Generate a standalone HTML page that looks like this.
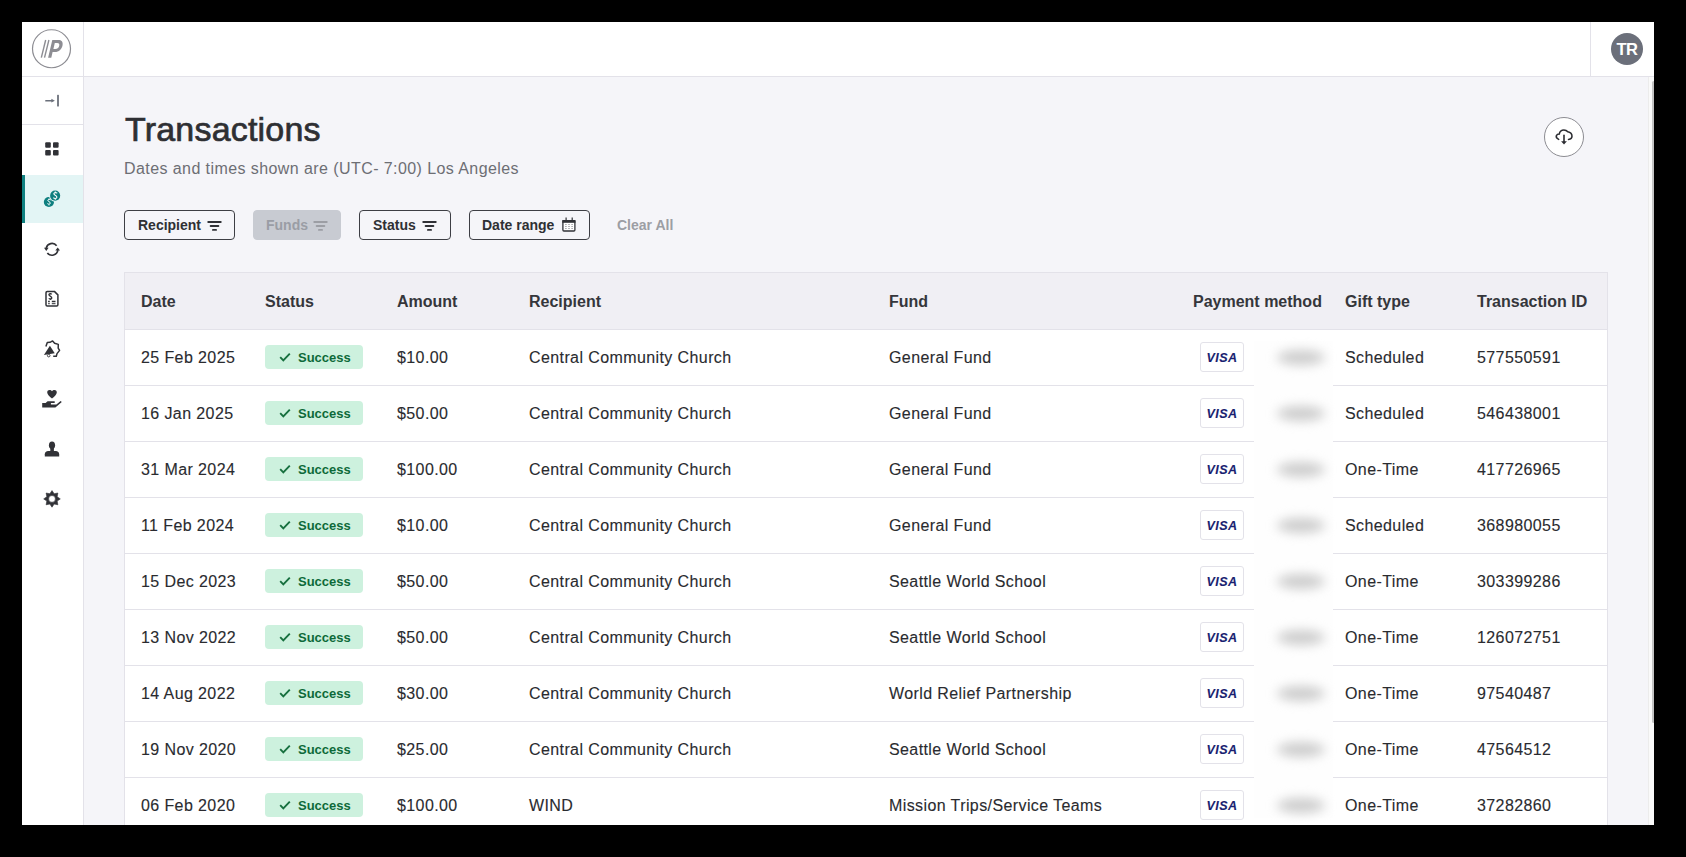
<!DOCTYPE html>
<html><head><meta charset="utf-8">
<style>
*{box-sizing:border-box;margin:0;padding:0}
html,body{width:1686px;height:857px;overflow:hidden}
body{background:#f5f5f9;font-family:"Liberation Sans",sans-serif;color:#2f3034;position:relative}
div,span,svg{position:absolute}
.fr{background:#000;z-index:50}
#hdr{left:22px;top:22px;width:1632px;height:55px;background:#fff;border-bottom:1px solid #e3e2e9}
#side{left:22px;top:22px;width:62px;height:803px;background:#fff;border-right:1px solid #e3e2e9}
.hl{background:#e3e2e9}
#avatar{left:1611px;top:33px;width:32px;height:32px;border-radius:50%;background:#6b6f7a;color:#fff;font-weight:700;font-size:16.5px;line-height:33px;text-align:center;letter-spacing:-0.4px}
#active{left:22px;top:175px;width:61px;height:48px;background:#e3f5f5}
#activebar{left:22px;top:175px;width:3px;height:48px;background:#0f8080}
#scroll{left:1648px;top:77px;width:6px;height:748px;background:#fafafa;border-left:1px solid #ececec}
#thumb{left:1652px;top:81px;width:3px;height:642px;background:#c4c4c4;border-radius:2px}
.title{left:125px;top:109px;font-size:34px;font-weight:400;-webkit-text-stroke:0.7px #2e2f33;letter-spacing:0.2px;color:#2e2f33;white-space:nowrap;line-height:40px}
.sub{left:124px;top:159px;font-size:16px;color:#6d6e74;white-space:nowrap;line-height:20px;letter-spacing:0.42px}
.btn{top:210px;height:30px;border:1px solid #3d3e44;border-radius:4px;font-size:14px;font-weight:700;color:#2f3034;line-height:28px;white-space:nowrap}
.btn span{position:static}
.btn svg{top:8px}
.btn.dis{background:#c8cbd2;border-color:#c8cbd2;color:#9a9da5}
.clear{left:617px;top:210px;line-height:30px;font-size:14px;font-weight:700;color:#9c9ea4;white-space:nowrap}
#dl{left:1544px;top:117px;width:40px;height:40px;border-radius:50%;background:#fff;border:1px solid #8c8c92}
.tbl{left:124px;width:1484px;height:600px;background:#fff;border:1px solid #e3e2e9}
.thead{left:125px;width:1482px;height:57px;background:#f0eff4;border-bottom:1px solid #e3e2e9}
.th{height:56px;line-height:58px;font-size:16px;font-weight:700;color:#35363b;white-space:nowrap}
.row{left:125px;width:1482px;height:56px;border-bottom:1px solid #e3e2e9}
.td{height:56px;line-height:56px;font-size:16px;color:#2a2b2f;white-space:nowrap;letter-spacing:0.4px;-webkit-text-stroke:0.12px #2a2b2f}
.badge{width:98px;height:24px;border-radius:4px;background:#cdf1de;color:#0d6a39;font-size:13px;font-weight:700;line-height:25px}
.badge span{left:33px;top:0}
.badge .chk{left:14px;top:7px}
.visa{width:44px;height:30px;border:1px solid #e3e2e9;border-radius:3px;background:#fff}
.visa span{left:0;width:42px;top:0;line-height:30px;text-align:center;font-size:12.5px;font-weight:700;font-style:italic;color:#1a1f71;letter-spacing:0.5px;-webkit-text-stroke:0.1px #1a1f71}
.blurbox{width:79px;height:477px;background:#fefefe;z-index:2}
.blob{width:48px;height:15px;border-radius:50%;background:#cdcdcd;filter:blur(5.5px);z-index:3}

</style></head>
<body>
<div id="hdr"></div>
<div id="side"></div>
<div class="hl" style="left:22px;top:124px;width:61px;height:1px"></div>
<div class="hl" style="left:22px;top:76px;width:61px;height:1px"></div>
<div class="hl" style="left:1590px;top:22px;width:1px;height:54px"></div>
<div id="avatar">TR</div>
<svg style="left:30px;top:28px" width="44" height="42" viewBox="0 0 44 42">
 <circle cx="21.5" cy="20.75" r="19" fill="none" stroke="#8d8d93" stroke-width="1.2"/>
 <path d="M11.3 29.7 L15.7 12" stroke="#8d8d93" stroke-width="1.4"/>
 <path d="M14.5 29.7 L18.9 12" stroke="#8d8d93" stroke-width="1.4"/>
 <path fill="#8d8d93" fill-rule="evenodd" d="M18.1 29.7 L22.3 12 L28.3 12 C31.6 12 33.1 14 32.6 16.9 C32 21 29 24 24.8 24 L22.6 24 L21.3 29.7 Z M23.4 21 L25.2 21 C27.6 21 29.1 19.3 29.3 17.2 C29.5 15.8 28.7 15.1 27.2 15.1 L24.8 15.1 Z"/>
</svg>
<div id="active"></div><div id="activebar"></div>
<svg style="left:0;top:0" width="90" height="520" viewBox="0 0 90 520">
 <!-- collapse arrow -->
 <g fill="#6b707b" stroke="none">
  <rect x="45.2" y="99.9" width="7" height="1.6" rx="0.5"/>
  <path d="M51.4 98.8 L54.9 100.7 L51.4 102.6 Z"/>
  <rect x="57.1" y="94.7" width="1.8" height="11.9" rx="0.5"/>
 </g>
 <!-- grid -->
 <g fill="#313237">
  <rect x="45.2" y="142.2" width="5.6" height="5.6" rx="1"/>
  <rect x="53" y="142.2" width="5.6" height="5.6" rx="1"/>
  <rect x="45.2" y="150" width="5.6" height="5.6" rx="1"/>
  <rect x="53" y="150" width="5.6" height="5.6" rx="1"/>
 </g>
 <!-- coins -->
 <g>
  <circle cx="48.9" cy="202" r="5.1" fill="#0e7f7f"/>
  <circle cx="55.15" cy="195.65" r="6.1" fill="#e2f4f4"/>
  <circle cx="55.15" cy="195.65" r="5.05" fill="#0e7f7f"/>
  <path d="M57.2 193.3 C56.6 192.4 54.2 192.3 53.8 193.7 C53.4 195.2 57.1 195.3 56.9 197.2 C56.7 198.8 54.2 198.7 53.4 197.7 M55.3 191.6 L55.3 192.6 M55.3 198.6 L55.3 199.7" fill="none" stroke="#fff" stroke-width="1.1"/>
  <path d="M50.6 199.9 C50.1 199.2 48.1 199.1 47.8 200.2 C47.5 201.5 50.5 201.6 50.3 203.2 C50.1 204.5 48.1 204.4 47.4 203.6 M49 198.5 L49 199.3 M49 204.5 L49 205.4" fill="none" stroke="#fff" stroke-width="1"/>
 </g>
 <!-- refresh -->
 <g fill="none" stroke="#313237" stroke-width="1.7">
  <path d="M46.23 248.07 A5.9 5.9 0 0 1 56.65 245.67"/>
  <path d="M47.35 252.93 A5.9 5.9 0 0 0 57.84 250.12"/>
 </g>
 <g fill="#313237">
  <path d="M44.0 247.8 L48.6 247.8 L46.3 251.0 Z"/>
  <path d="M55.3 250.5 L60.0 250.5 L57.7 247.4 Z"/>
 </g>
 <!-- document -->
 <g fill="none" stroke="#313237" stroke-width="1.5">
  <path d="M47.2 291.6 L54.6 291.6 L57.9 294.9 L57.9 304.8 Q57.9 306 56.7 306 L47.2 306 Q46 306 46 304.8 L46 292.8 Q46 291.6 47.2 291.6 Z"/>
  <path d="M51.7 294.4 C51.1 293.5 49.1 293.5 48.9 294.7 C48.7 296 51.9 296.2 51.8 297.9 C51.7 299.2 49.6 299.3 48.8 298.4 M50.3 292.9 L50.3 293.7 M50.3 299.1 L50.3 300" stroke-width="1.35"/>
  <path d="M48.1 301.5 L49.8 301.5 M51.8 301.5 L55.5 301.5" stroke-width="1.3"/>
  <path d="M48.1 303.6 L49.8 303.6 M51.8 303.6 L55.5 303.6" stroke="#55565b" stroke-width="1.2"/>
 </g>
 <!-- badge bell -->
 <g>
  <path d="M45.9 346.5 L47.3 342.6 L50 342.3 L52.6 340.9 L54.6 343.2 L58.3 344.4 L58.2 348.2 L59.6 350.4 L57 353.6 L56.3 356.2 L53.2 356.3" fill="none" stroke="#313237" stroke-width="1.5" stroke-linejoin="round"/>
  <path d="M43.9 355 L49.9 345.8 L54.7 353.3 Z" fill="#313237"/>
  <circle cx="48.7" cy="355.6" r="1.3" fill="#fff" stroke="#313237" stroke-width="0.9"/>
 </g>
 <!-- hand heart -->
 <g fill="#313237">
  <path d="M52 391.2 C50.9 389.6 47.2 389.4 47.2 392.4 C47.2 394.5 50 396.6 52 398.5 C54 396.6 56.8 394.5 56.8 392.4 C56.8 389.4 53.1 389.6 52 391.2 Z"/>
  <path d="M42.2 403.1 L45.6 403.1 L47.6 401.2 L54.7 401.2 L54.7 403 L50.9 403 L50.9 404.5 L56.4 404.5 L60.6 400.9 L61.8 402.1 L55.4 407.5 L42.2 407.5 Z"/>
 </g>
 <!-- person -->
 <g fill="#313237">
  <ellipse cx="52" cy="445.2" rx="3.1" ry="3.8"/>
  <rect x="50.3" y="447" width="3.6" height="5"/>
  <path d="M44.8 456.4 L44.8 454.2 Q45 451.2 48.2 451 L55.8 451 Q59 451.2 59.2 454.2 L59.2 456.4 Z"/>
 </g>
 <!-- gear -->
 <path fill="#313237" fill-rule="evenodd" stroke="#313237" stroke-width="0.6" stroke-linejoin="round" d="M52.00 490.60 L54.14 493.73 L57.87 493.03 L57.17 496.76 L60.30 498.90 L57.17 501.04 L57.87 504.77 L54.14 504.07 L52.00 507.20 L49.86 504.07 L46.13 504.77 L46.83 501.04 L43.70 498.90 L46.83 496.76 L46.13 493.03 L49.86 493.73 Z M55.4 498.9 A3.4 3.4 0 1 0 48.6 498.9 A3.4 3.4 0 1 0 55.4 498.9 Z"/>
</svg>
<div id="scroll"></div><div id="thumb"></div>
<div class="title">Transactions</div>
<div class="sub">Dates and times shown are (UTC- 7:00) Los Angeles</div>
<div class="btn" style="left:124px;width:111px"><span style="position:absolute;left:13px">Recipient</span><svg style="left:82px;top:9px" width="16" height="11" viewBox="0 0 16 11"><g stroke="#313237" stroke-width="1.8" stroke-linecap="round"><path d="M1.2 2 L13.8 2"/><path d="M3.6 6 L11.4 6"/><path d="M5.9 9.9 L9.1 9.9"/></g></svg></div>
<div class="btn dis" style="left:253px;width:88px"><span style="position:absolute;left:12px">Funds</span><svg style="left:59px;top:9px" width="16" height="11" viewBox="0 0 16 11"><g stroke="#9c9ea4" stroke-width="1.8" stroke-linecap="round"><path d="M1.2 2 L13.8 2"/><path d="M3.6 6 L11.4 6"/><path d="M5.9 9.9 L9.1 9.9"/></g></svg></div>
<div class="btn" style="left:359px;width:92px"><span style="position:absolute;left:13px">Status</span><svg style="left:62px;top:9px" width="16" height="11" viewBox="0 0 16 11"><g stroke="#313237" stroke-width="1.8" stroke-linecap="round"><path d="M1.2 2 L13.8 2"/><path d="M3.6 6 L11.4 6"/><path d="M5.9 9.9 L9.1 9.9"/></g></svg></div>
<div class="btn" style="left:469px;width:121px"><span style="position:absolute;left:12px">Date range</span>
<svg style="left:91px;top:6px" width="16" height="16" viewBox="0 0 16 16"><g transform="translate(-561,-217)">
 <rect x="562.9" y="220.6" width="12" height="10.4" rx="1" fill="#fff" stroke="#313237" stroke-width="1.3"/>
 <rect x="562.3" y="220" width="13.2" height="2.8" fill="#313237"/>
 <path d="M566.1 217.6 L566.1 221.5 M572.2 217.6 L572.2 221.5" stroke="#313237" stroke-width="1.2"/>
 <g fill="#9a9ba0"><rect x="565.2" y="224" width="1.4" height="1"/><rect x="568.3" y="224" width="1.4" height="1"/><rect x="571.4" y="224" width="1.4" height="1"/><rect x="565.2" y="226" width="1.4" height="1"/><rect x="568.3" y="226" width="1.4" height="1"/><rect x="571.4" y="226" width="1.4" height="1"/><rect x="565.2" y="228" width="1.4" height="1"/><rect x="568.3" y="228" width="1.4" height="1"/><rect x="571.4" y="228" width="1.4" height="1"/></g>
</g></svg></div>
<div class="clear">Clear All</div>
<div id="dl"></div>
<svg style="left:1540px;top:115px" width="48" height="44" viewBox="1540 115 48 44">
 <path d="M1558.7 139.4 C1556.8 138.6 1555.9 137 1556.4 135.6 C1556.9 134.5 1558 134.1 1559.3 134.1 C1559.5 131.8 1561.5 129.9 1563.9 129.9 C1565.6 129.9 1566.9 130.7 1567.8 131.8 C1570.2 132.3 1572 133.8 1572 136.3 C1572 138 1570.6 139.2 1568.5 139.5" fill="none" stroke="#2a2b30" stroke-width="1.5" stroke-linecap="round"/>
 <path d="M1564 135.4 L1564 142" stroke="#2a2b30" stroke-width="1.6" stroke-linecap="round"/>
 <path d="M1561.1 141.2 L1566.9 141.2 L1564 144.4 Z" fill="#2a2b30"/>
</svg>
<div class="tbl" style="top:272px"></div>
<div class="thead" style="top:273px"></div>
<div class="th" style="left:141px;top:273px">Date</div>
<div class="th" style="left:265px;top:273px">Status</div>
<div class="th" style="left:397px;top:273px">Amount</div>
<div class="th" style="left:529px;top:273px">Recipient</div>
<div class="th" style="left:889px;top:273px">Fund</div>
<div class="th" style="left:1193px;top:273px">Payment method</div>
<div class="th" style="left:1345px;top:273px">Gift type</div>
<div class="th" style="left:1477px;top:273px">Transaction ID</div>
<div class="blurbox" style="left:1254px;top:341px"></div><div class="row" style="top:330px"></div>
<div class="td" style="left:141px;top:330px">25 Feb 2025</div><div class="badge" style="left:265px;top:345px"><svg class="chk" width="12" height="10" viewBox="0 0 12 10"><path d="M1.2 5.2 L4.3 8.3 L10.8 1.6" fill="none" stroke="#17703f" stroke-width="1.9"/></svg><span>Success</span></div><div class="td" style="left:397px;top:330px">$10.00</div><div class="td" style="left:529px;top:330px">Central Community Church</div><div class="td" style="left:889px;top:330px">General Fund</div><div class="visa" style="left:1200px;top:342px"><span>VISA</span></div><div class="blob" style="left:1277px;top:350px"></div><div class="td" style="left:1345px;top:330px">Scheduled</div><div class="td" style="left:1477px;top:330px">577550591</div>
<div class="row" style="top:386px"></div>
<div class="td" style="left:141px;top:386px">16 Jan 2025</div><div class="badge" style="left:265px;top:401px"><svg class="chk" width="12" height="10" viewBox="0 0 12 10"><path d="M1.2 5.2 L4.3 8.3 L10.8 1.6" fill="none" stroke="#17703f" stroke-width="1.9"/></svg><span>Success</span></div><div class="td" style="left:397px;top:386px">$50.00</div><div class="td" style="left:529px;top:386px">Central Community Church</div><div class="td" style="left:889px;top:386px">General Fund</div><div class="visa" style="left:1200px;top:398px"><span>VISA</span></div><div class="blob" style="left:1277px;top:406px"></div><div class="td" style="left:1345px;top:386px">Scheduled</div><div class="td" style="left:1477px;top:386px">546438001</div>
<div class="row" style="top:442px"></div>
<div class="td" style="left:141px;top:442px">31 Mar 2024</div><div class="badge" style="left:265px;top:457px"><svg class="chk" width="12" height="10" viewBox="0 0 12 10"><path d="M1.2 5.2 L4.3 8.3 L10.8 1.6" fill="none" stroke="#17703f" stroke-width="1.9"/></svg><span>Success</span></div><div class="td" style="left:397px;top:442px">$100.00</div><div class="td" style="left:529px;top:442px">Central Community Church</div><div class="td" style="left:889px;top:442px">General Fund</div><div class="visa" style="left:1200px;top:454px"><span>VISA</span></div><div class="blob" style="left:1277px;top:462px"></div><div class="td" style="left:1345px;top:442px">One-Time</div><div class="td" style="left:1477px;top:442px">417726965</div>
<div class="row" style="top:498px"></div>
<div class="td" style="left:141px;top:498px">11 Feb 2024</div><div class="badge" style="left:265px;top:513px"><svg class="chk" width="12" height="10" viewBox="0 0 12 10"><path d="M1.2 5.2 L4.3 8.3 L10.8 1.6" fill="none" stroke="#17703f" stroke-width="1.9"/></svg><span>Success</span></div><div class="td" style="left:397px;top:498px">$10.00</div><div class="td" style="left:529px;top:498px">Central Community Church</div><div class="td" style="left:889px;top:498px">General Fund</div><div class="visa" style="left:1200px;top:510px"><span>VISA</span></div><div class="blob" style="left:1277px;top:518px"></div><div class="td" style="left:1345px;top:498px">Scheduled</div><div class="td" style="left:1477px;top:498px">368980055</div>
<div class="row" style="top:554px"></div>
<div class="td" style="left:141px;top:554px">15 Dec 2023</div><div class="badge" style="left:265px;top:569px"><svg class="chk" width="12" height="10" viewBox="0 0 12 10"><path d="M1.2 5.2 L4.3 8.3 L10.8 1.6" fill="none" stroke="#17703f" stroke-width="1.9"/></svg><span>Success</span></div><div class="td" style="left:397px;top:554px">$50.00</div><div class="td" style="left:529px;top:554px">Central Community Church</div><div class="td" style="left:889px;top:554px">Seattle World School</div><div class="visa" style="left:1200px;top:566px"><span>VISA</span></div><div class="blob" style="left:1277px;top:574px"></div><div class="td" style="left:1345px;top:554px">One-Time</div><div class="td" style="left:1477px;top:554px">303399286</div>
<div class="row" style="top:610px"></div>
<div class="td" style="left:141px;top:610px">13 Nov 2022</div><div class="badge" style="left:265px;top:625px"><svg class="chk" width="12" height="10" viewBox="0 0 12 10"><path d="M1.2 5.2 L4.3 8.3 L10.8 1.6" fill="none" stroke="#17703f" stroke-width="1.9"/></svg><span>Success</span></div><div class="td" style="left:397px;top:610px">$50.00</div><div class="td" style="left:529px;top:610px">Central Community Church</div><div class="td" style="left:889px;top:610px">Seattle World School</div><div class="visa" style="left:1200px;top:622px"><span>VISA</span></div><div class="blob" style="left:1277px;top:630px"></div><div class="td" style="left:1345px;top:610px">One-Time</div><div class="td" style="left:1477px;top:610px">126072751</div>
<div class="row" style="top:666px"></div>
<div class="td" style="left:141px;top:666px">14 Aug 2022</div><div class="badge" style="left:265px;top:681px"><svg class="chk" width="12" height="10" viewBox="0 0 12 10"><path d="M1.2 5.2 L4.3 8.3 L10.8 1.6" fill="none" stroke="#17703f" stroke-width="1.9"/></svg><span>Success</span></div><div class="td" style="left:397px;top:666px">$30.00</div><div class="td" style="left:529px;top:666px">Central Community Church</div><div class="td" style="left:889px;top:666px">World Relief Partnership</div><div class="visa" style="left:1200px;top:678px"><span>VISA</span></div><div class="blob" style="left:1277px;top:686px"></div><div class="td" style="left:1345px;top:666px">One-Time</div><div class="td" style="left:1477px;top:666px">97540487</div>
<div class="row" style="top:722px"></div>
<div class="td" style="left:141px;top:722px">19 Nov 2020</div><div class="badge" style="left:265px;top:737px"><svg class="chk" width="12" height="10" viewBox="0 0 12 10"><path d="M1.2 5.2 L4.3 8.3 L10.8 1.6" fill="none" stroke="#17703f" stroke-width="1.9"/></svg><span>Success</span></div><div class="td" style="left:397px;top:722px">$25.00</div><div class="td" style="left:529px;top:722px">Central Community Church</div><div class="td" style="left:889px;top:722px">Seattle World School</div><div class="visa" style="left:1200px;top:734px"><span>VISA</span></div><div class="blob" style="left:1277px;top:742px"></div><div class="td" style="left:1345px;top:722px">One-Time</div><div class="td" style="left:1477px;top:722px">47564512</div>
<div class="row" style="top:778px"></div>
<div class="td" style="left:141px;top:778px">06 Feb 2020</div><div class="badge" style="left:265px;top:793px"><svg class="chk" width="12" height="10" viewBox="0 0 12 10"><path d="M1.2 5.2 L4.3 8.3 L10.8 1.6" fill="none" stroke="#17703f" stroke-width="1.9"/></svg><span>Success</span></div><div class="td" style="left:397px;top:778px">$100.00</div><div class="td" style="left:529px;top:778px">WIND</div><div class="td" style="left:889px;top:778px">Mission Trips/Service Teams</div><div class="visa" style="left:1200px;top:790px"><span>VISA</span></div><div class="blob" style="left:1277px;top:798px"></div><div class="td" style="left:1345px;top:778px">One-Time</div><div class="td" style="left:1477px;top:778px">37282860</div>
<div class="fr" style="left:0;top:0;width:1686px;height:22px"></div><div class="fr" style="left:0;top:825px;width:1686px;height:32px"></div><div class="fr" style="left:0;top:0;width:22px;height:857px"></div><div class="fr" style="left:1654px;top:0;width:32px;height:857px"></div>
</body></html>
